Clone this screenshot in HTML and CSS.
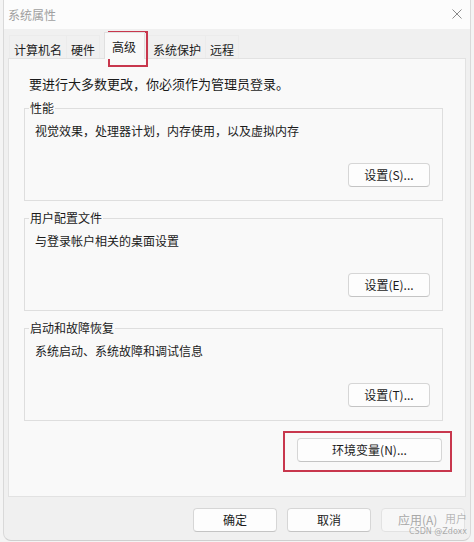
FILE: index.html
```html
<!DOCTYPE html>
<html lang="zh-CN">
<head>
<meta charset="utf-8">
<title>系统属性</title>
<link rel="stylesheet" href="styles.css">
</head>
<body>
<div class="window">
  <div class="titlebar">
    <span class="title">系统属性</span>
    <svg class="close" width="10" height="10" viewBox="0 0 10 10"><path d="M0.5 0.5 L9.5 9.5 M9.5 0.5 L0.5 9.5" stroke="#8a8a8a" stroke-width="1" fill="none"/></svg>
  </div>
  <div class="content">
    <div class="tabs">
      <div class="tab">计算机名</div>
      <div class="tab">硬件</div>
      <div class="tab active">高级</div>
      <div class="tab">系统保护</div>
      <div class="tab">远程</div>
    </div>
    <div class="panel">
      <p class="intro">要进行大多数更改，你必须作为管理员登录。</p>
      <div class="groups">
        <fieldset class="group">
          <legend>性能</legend>
          <p class="desc">视觉效果，处理器计划，内存使用，以及虚拟内存</p>
          <div class="btn-row"><button class="btn">设置(S)...</button></div>
        </fieldset>
        <fieldset class="group">
          <legend>用户配置文件</legend>
          <p class="desc">与登录帐户相关的桌面设置</p>
          <div class="btn-row"><button class="btn">设置(E)...</button></div>
        </fieldset>
        <fieldset class="group">
          <legend>启动和故障恢复</legend>
          <p class="desc">系统启动、系统故障和调试信息</p>
          <div class="btn-row"><button class="btn">设置(T)...</button></div>
        </fieldset>
        <div class="env-row"><button class="btn env">环境变量(N)...</button></div>
      </div>
    </div>
    <div class="footer">
      <button class="btn big">确定</button>
      <button class="btn big">取消</button>
      <button class="btn big disabled">应用(A)</button>
    </div>
  </div>
  <div class="mark mark-tab"></div>
  <div class="mark mark-env"></div>
  <div class="watermark">
    <span class="wm-big">用户</span>
    <span class="wm-small">CSDN @Zdoxx</span>
  </div>
</div>
</body>
</html>
```

FILE: styles.css
```css
* { box-sizing: border-box; }

html, body {
  margin: 0;
  padding: 0;
}

body {
  width: 474px;
  height: 542px;
  background: #f4f4f4;
  font-family: "Noto Sans CJK SC", "Microsoft YaHei", sans-serif;
  font-size: 12px;
  color: #1b1b1b;
  overflow: hidden;
}

.window {
  position: relative;
  margin-left: 3px;
  width: 468px;
  height: 541px;
  border-left: 1px solid #d9d9d9;
  border-right: 1px solid #d9d9d9;
  border-bottom: 1px solid #cfcfcf;
  border-radius: 0 0 8px 8px;
  overflow: hidden;
  background: #f0f0f0;
}

.titlebar {
  height: 29px;
  background: #fcfcfc;
  display: flex;
  align-items: center;
  justify-content: space-between;
  padding: 0 8px 0 4px;
}

.title {
  font-size: 12px;
  line-height: 16px;
  color: #a0a0a0;
}

.close {
  display: block;
  margin-top: -1px;
}

.content {
  padding: 0 4px 8px 4px;
}

.tabs {
  height: 29px;
  display: flex;
  align-items: flex-end;
  padding-left: 1px;
}

.tab {
  height: 23px;
  padding: 6px 4px 0 4px;
  line-height: 16px;
  font-size: 12px;
  color: #1b1b1b;
  border: 1px solid #ebebeb;
  border-bottom: none;
  margin-right: -1px;
  background: #f0f0f0;
}

.tab.active {
  height: 27px;
  padding: 6px 8px 0 7px;
  margin: 0 3px -1px 5px;
  background: #f9f9f9;
  border-color: #e0e0e0;
  position: relative;
  z-index: 1;
}

.panel {
  height: 439px;
  background: #f9f9f9;
  border: 1px solid #e2e2e2;
}

.intro {
  margin: 0;
  padding: 17px 0 0 20px;
  font-size: 13px;
  line-height: 16px;
}

.groups {
  margin: 0 22px 0 15px;
}

.group {
  margin: 8px 0 0 0;
  padding: 0 12px 13px 4px;
  border: 1px solid #dedede;
  min-width: 0;
}

.group + .group {
  margin-top: 9px;
}

.group legend {
  padding: 0 1px;
  font-size: 12px;
  line-height: 16px;
}

.desc {
  margin: 7px 0 0 6px;
  font-size: 12px;
  line-height: 16px;
}

.btn-row {
  display: flex;
  justify-content: flex-end;
  margin-top: 24px;
}

.btn {
  font-family: "Noto Sans CJK SC", "Microsoft YaHei", sans-serif;
  font-size: 12px;
  line-height: 16px;
  color: #1b1b1b;
  height: 24px;
  width: 82px;
  padding: 0;
  background: #fdfdfd;
  border: 1px solid #d6d6d6;
  border-bottom-color: #c4c4c4;
  border-radius: 4px;
}

.env-row {
  display: flex;
  justify-content: flex-end;
  margin-top: 17px;
  padding-right: 1px;
}

.btn.env {
  width: 145px;
}

.footer {
  display: flex;
  justify-content: flex-end;
  gap: 10px;
  margin-top: 11px;
  padding-right: 1px;
}

.btn.big {
  width: 84px;
}

.btn.disabled {
  color: #a8a8a8;
  background: #f7f7f7;
  border-color: #e2e2e2;
  text-align: left;
  padding-left: 16px;
}

.mark {
  position: absolute;
  border: 2px solid #c8374d;
  pointer-events: none;
}

.mark-tab {
  left: 104px;
  top: 31px;
  width: 40px;
  height: 36px;
}

.mark-env {
  left: 279px;
  top: 431px;
  width: 169px;
  height: 41px;
}

.watermark {
  position: absolute;
  right: 3px;
  top: 511px;
  display: flex;
  flex-direction: column;
  align-items: flex-end;
  pointer-events: none;
}

.wm-big {
  font-size: 11px;
  line-height: 14px;
  color: rgba(130, 130, 130, 0.55);
}

.wm-small {
  font-family: "DejaVu Sans", sans-serif;
  font-size: 8px;
  line-height: 10px;
  color: rgba(120, 120, 120, 0.6);
  margin-top: 2px;
}
```
